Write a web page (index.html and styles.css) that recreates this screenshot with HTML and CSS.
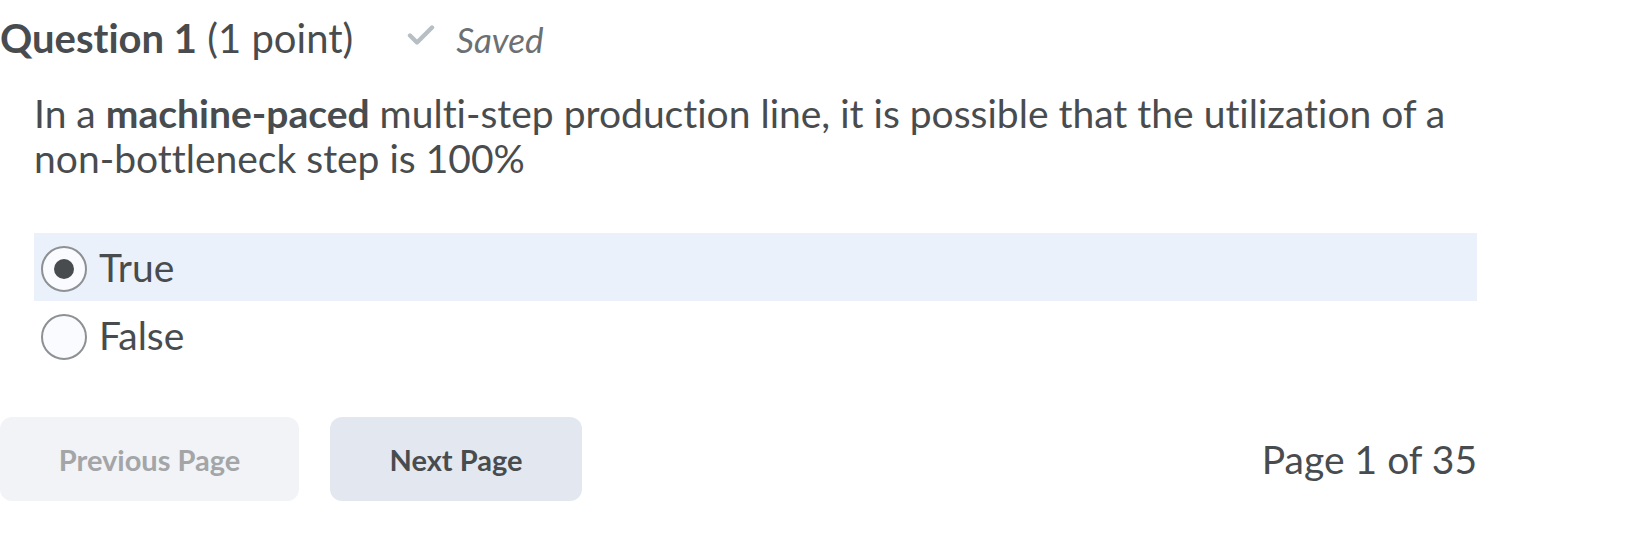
FILE: index.html
```html
<!DOCTYPE html>
<html lang="en">
<head>
<meta charset="utf-8">
<title>Question 1</title>
<link rel="stylesheet" href="styles.css">
</head>
<body>
<div class="page">
  <div class="q-header">
    <h2 class="q-title"><strong>Question 1</strong> <span class="q-points">(1 point)</span></h2>
    <div class="saved">
      <svg class="check" viewBox="0 0 28 22" width="28" height="22" aria-hidden="true">
        <polyline points="3,11.5 10,18.5 25,3.5" fill="none" stroke="#b7bfc5" stroke-width="4.4" stroke-linecap="round" stroke-linejoin="round"/>
      </svg>
      <span class="saved-text">Saved</span>
    </div>
  </div>
  <div class="q-body">
    <p class="q-text">In a <strong>machine-paced</strong> multi-step production line, it is possible that the utilization of a non-bottleneck step is 100%</p>
    <ul class="answers">
      <li class="answer selected">
        <span class="radio checked"></span>
        <span class="answer-label">True</span>
      </li>
      <li class="answer">
        <span class="radio"></span>
        <span class="answer-label">False</span>
      </li>
    </ul>
  </div>
  <div class="nav">
    <div class="nav-buttons">
      <button class="btn btn-disabled" type="button">Previous Page</button>
      <button class="btn btn-next" type="button">Next Page</button>
    </div>
    <div class="page-count">Page 1 of 35</div>
  </div>
</div>
</body>
</html>
```
FILE: styles.css
```css
* { box-sizing: border-box; }

html, body {
  margin: 0;
  padding: 0;
  background: #ffffff;
}

body {
  font-family: Lato, "Noto Sans", "Liberation Sans", sans-serif;
  font-variant-ligatures: none;
  font-feature-settings: "liga" 0, "clig" 0;
  color: #494c4e;
}

.page {
  width: 1477px;
}

.q-header {
  display: flex;
  align-items: baseline;
  margin-top: 14px;
  height: 48px;
}

.q-title {
  margin: 0;
  font-size: 40px;
  line-height: 48px;
  font-weight: 400;
  color: #494c4e;
}

.q-title strong {
  font-weight: 700;
}

.saved {
  display: flex;
  align-items: baseline;
  margin-left: 54px;
  gap: 21px;
}

.check {
  display: block;
  align-self: center;
  position: relative;
  top: -4px;
}

.saved-text {
  font-size: 35px;
  font-style: italic;
  color: #6d7073;
  line-height: 48px;
}

.q-body {
  padding-left: 34px;
  margin-top: 29px;
}

.q-text {
  margin: 0;
  font-size: 39px;
  line-height: 45px;
}

.q-text strong {
  font-weight: 700;
}

.answers {
  list-style: none;
  margin: 52px 0 0 0;
  padding: 0;
}

.answer {
  display: flex;
  align-items: center;
  gap: 12px;
  height: 68px;
  padding-left: 7px;
}

.answer.selected {
  background: #eaf1fb;
}

.radio {
  width: 46px;
  height: 46px;
  border-radius: 50%;
  border: 2px solid #8e9194;
  background: #f9fbff;
  display: flex;
  align-items: center;
  justify-content: center;
  flex: none;
  position: relative;
  top: 2px;
}

.radio.checked::after {
  content: "";
  width: 20px;
  height: 20px;
  border-radius: 50%;
  background: #494c4e;
}

.answer-label {
  font-size: 39px;
  line-height: 45px;
}

.nav {
  display: flex;
  align-items: center;
  justify-content: space-between;
  margin-top: 48px;
}

.nav-buttons {
  display: flex;
  gap: 31px;
}

.btn {
  height: 84px;
  border: none;
  border-radius: 12px;
  padding: 0;
  font-family: Lato, "Noto Sans", "Liberation Sans", sans-serif;
  font-variant-ligatures: none;
  font-size: 29px;
  font-weight: 700;
  cursor: pointer;
}

.btn-disabled {
  width: 299px;
  background: #f1f3f7;
  color: #a3a5a7;
}

.btn-next {
  width: 252px;
  background: #e3e8f0;
  color: #494c4e;
}

.page-count {
  font-size: 39px;
  line-height: 45px;
  color: #494c4e;
}
```
